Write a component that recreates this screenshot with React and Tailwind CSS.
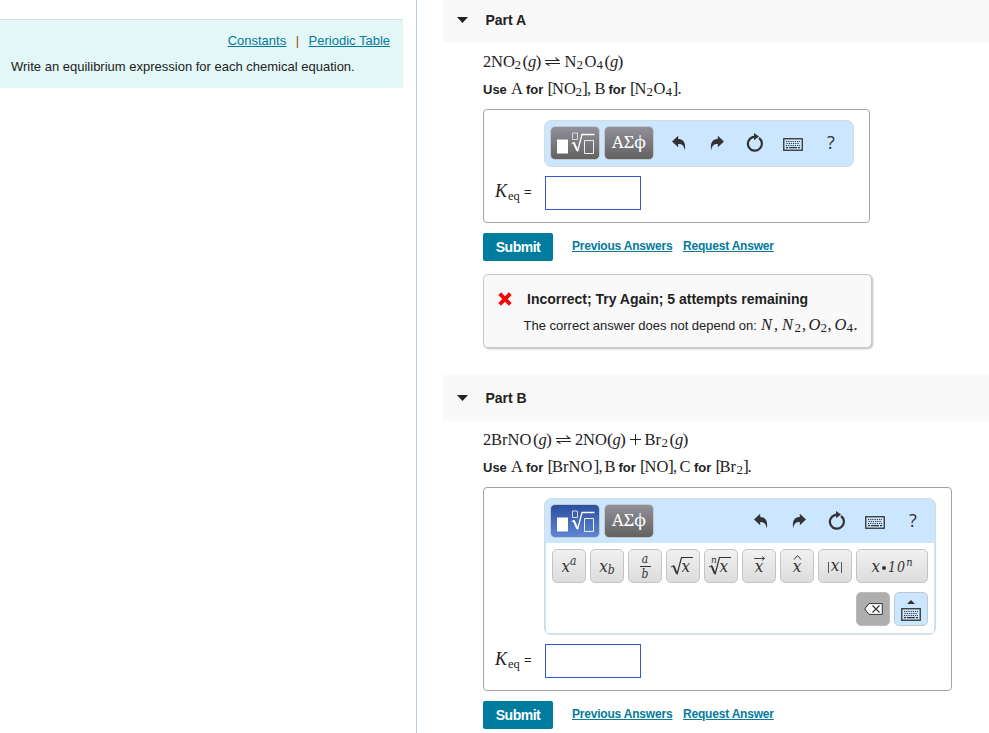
import React from 'react';

const SANS = 'font-["Liberation_Sans",Arial,sans-serif]';
const SERIF = 'font-["Liberation_Serif","Times_New_Roman",serif]';

const KINDS = {
    rm: 'text-[16.5px]',
    it: 'text-[16.5px] italic',
    sub: 'text-[13px] translate-y-[2px]',
    b: 'text-[13px] font-bold font-["Liberation_Sans",Arial,sans-serif]',
    br: 'text-[17.5px]',
};

// tokens: [text, kind, advance]
const G = [['(', 'br', 5.5], ['g', 'it', 7.5], [')', 'br', 5.5]];

const EQ_A = [
    ['2', 'rm', 8], ['NO', 'rm', 23.5], ['2', 'sub', 8], ...G, ['⇌', 'arrow', 23.5],
    ['N', 'rm', 12], ['2', 'sub', 8], ['O', 'rm', 12], ['4', 'sub', 8], ...G,
];
const USE_A = [
    ['Use', 'b', 28], ['A', 'rm', 15], ['for', 'b', 21.5], ['[', 'br', 4.5], ['NO', 'rm', 23.5], ['2', 'sub', 6.5],
    [']', 'br', 5], [',', 'rm', 7.5], ['B', 'rm', 14], ['for', 'b', 21.5], ['[', 'br', 4.5], ['N', 'rm', 12],
    ['2', 'sub', 7], ['O', 'rm', 12], ['4', 'sub', 7], [']', 'br', 5], ['.', 'rm', 5],
];
const EQ_B = [
    ['2', 'rm', 8], ['BrNO', 'rm', 42], ...G, ['⇌', 'arrow', 23.5], ['2', 'rm', 8], ['NO', 'rm', 24], ...G,
    ['+', 'plus', 19], ['Br', 'rm', 17], ['2', 'sub', 8], ...G,
];
const USE_B = [
    ['Use', 'b', 28], ['A', 'rm', 15], ['for', 'b', 21.5], ['[', 'br', 4.5], ['BrNO', 'rm', 41.5],
    [']', 'br', 5], [',', 'rm', 6], ['B', 'rm', 14], ['for', 'b', 21.5], ['[', 'br', 4.5], ['NO', 'rm', 23.5],
    [']', 'br', 5], [',', 'rm', 6.5], ['C', 'rm', 14.5], ['for', 'b', 21.5], ['[', 'br', 4], ['Br', 'rm', 17],
    ['2', 'sub', 6.5], [']', 'br', 4.5], ['.', 'rm', 5],
];
const DEPENDS = [
    ['N', 'it', 13], [',', 'rm', 8], ['N', 'it', 12.5], ['2', 'sub', 7.5], [',', 'rm', 6.5], ['O', 'it', 12],
    ['2', 'sub', 7], [',', 'rm', 7], ['O', 'it', 12], ['4', 'sub', 7], ['.', 'rm', 5],
];

const Tokens = ({ items }) => (
    <span className={`flex h-5 items-baseline whitespace-nowrap text-[#222] ${SERIF}`}>
        {items.map(([text, kind, width], i) => {
            if (kind === 'arrow') {
                return (
                    <span key={i} className="flex justify-center" style={{ width }}>
                        <svg width="15" height="9" viewBox="0 0 15 9" className="-translate-y-px" fill="none" stroke="#222" strokeWidth="1.1" aria-label={text}>
                            <path d="M0 3.500h14.500M10.500.5Q12 3 14.500 3.500M15 6.500H.5M4.500 9Q3 7 .5 6.500" />
                        </svg>
                    </span>
                );
            }
            if (kind === 'plus') {
                return (
                    <span key={i} className="flex justify-center" style={{ width }}>
                        <svg width="11" height="11" viewBox="0 0 11 11" stroke="#222" strokeWidth="1" aria-label={text}>
                            <path d="M5.500 0v11M0 5.500h11" />
                        </svg>
                    </span>
                );
            }
            return (
                <span key={i} className={`inline-block leading-5 ${KINDS[kind]}`} style={{ width }}>{text}</span>
            );
        })}
    </span>
);

const UndoIcon = ({ flip }) => (
    <svg width="14" height="16" viewBox="0 0 14 16" fill="#333" className={`translate-y-px ${flip ? '-scale-x-100' : ''}`}>
        <path d="M0 6.500 6.200 .8v3.200C11 4 14.200 7.200 12.800 15.500 12.100 10.800 10.500 9 6.200 9V12.200z" />
    </svg>
);

const ResetIcon = () => (
    <svg width="18" height="19" viewBox="0 0 18 19" fill="none">
        <path d="M13 5A7 7 0 1 1 6.500 4.100L10 3.600" stroke="#333" strokeWidth="2.200" />
        <path d="M8 0l5 3.600-5 3.600z" fill="#333" />
    </svg>
);

const KeyboardIcon = () => (
    <svg width="20" height="13" viewBox="0 0 20 13" fill="none">
        <rect x=".75" y=".75" width="18.500" height="11.500" stroke="#333" strokeWidth="1.300" />
        <path d="M3 3.500h14M3.500 5.500h13M3 7.500h14" stroke="#333" strokeWidth="1.100" strokeDasharray="1.200 1" />
        <path d="M3 9.700h2M6 9.700h8M15 9.700h2" stroke="#333" strokeWidth="1.200" />
    </svg>
);

const TemplateIcon = () => (
    <svg width="40" height="24" viewBox="0 0 40 24" fill="none" className="translate-x-px">
        <path d="M1 8.500h11v14H1z" fill="#fff" />
        <path d="M16.500 2h5v6.500h-5z" stroke="#d8d8de" />
        <path d="M15.500 12.700l2.500-1.500" stroke="#fff" />
        <path d="M17.700 11.500l3.500 8" stroke="#fff" strokeWidth="2" />
        <path d="M21.500 20.500L26 3.500H38.500" stroke="#fff" strokeWidth="1.300" />
        <path d="M28.500 9.500h9v13h-9z" stroke="#eee" />
    </svg>
);

const ModeButton = ({ active, children }) => (
    <button
        className={`h-[34px] w-[50px] shrink-0 flex items-center justify-center rounded-[5px] border border-[#c8c8c8] bg-linear-to-b ${active ? 'from-[#2c4f9e] to-[#5f87d6]' : 'from-[#92909a] to-[#626262]'}`}
    >
        {children}
    </button>
);

const Toolbar = ({ active }) => (
    <div className={`flex items-start pl-[5px] pt-[5px] ${active ? 'h-[44px]' : 'h-[45px]'}`}>
        <ModeButton active={active}><TemplateIcon /></ModeButton>
        <span className="w-1" />
        <ModeButton>
            <span className='-mt-[3px] font-["Noto_Serif","DejaVu_Serif",serif] text-[17px] leading-none text-white [font-stretch:condensed]'>ΑΣϕ</span>
        </ModeButton>
        <div className="ml-auto flex pr-[3px] *:flex *:h-8 *:w-[38px] *:items-center *:justify-center">
            <button><UndoIcon /></button>
            <button><UndoIcon flip /></button>
            <button><ResetIcon /></button>
            <button className="pt-[5px]"><KeyboardIcon /></button>
            <button className='font-["Open_Sans",sans-serif] text-[18px] text-[#333]'>?</button>
        </div>
    </div>
);

const Key = ({ className = 'w-[34px]', children }) => (
    <button
        className={`h-[34px] shrink-0 flex items-center justify-center rounded-[5px] border border-[#c4c4c4] bg-linear-to-b from-[#f1f1f1] to-[#dcdcdc] font-["DejaVu_Serif",serif] text-[17px] leading-none italic text-[#333] [font-stretch:condensed] ${className}`}
    >
        {children}
    </button>
);

const RootKey = ({ index }) => (
    <svg width="26" height="26" viewBox="0 0 26 26" className="-translate-x-px overflow-visible">
        <path d="M2 14l3-1.500" stroke="#333" fill="none" />
        <path d="M4.700 13l3 7.500" stroke="#333" strokeWidth="2" />
        <path d="M8 21.500L12.500 4.500H24" stroke="#333" strokeWidth="1.200" fill="none" />
        {index && <text x="4" y="10" fontSize="10" fill="#333">n</text>}
        <text x="12.500" y="19" fontSize="17" fill="#333">x</text>
    </svg>
);

const Palette = () => (
    <div className="mx-px mb-px h-[90px] rounded-b-[3px] bg-white pt-[6px] pl-[6px] pr-[6px]">
        <div className="flex gap-1">
            <Key>x<sup className="-top-[5px] text-[12px]">a</sup></Key>
            <Key>x<sub className="top-[4px] text-[12px]">b</sub></Key>
            <Key>
                <span className="flex w-[11px] flex-col items-center text-[12px] leading-[12px]">
                    <span className="w-full border-b border-[#333] pb-px text-center">a</span>
                    <span className="pt-px">b</span>
                </span>
            </Key>
            <Key><RootKey /></Key>
            <Key><RootKey index /></Key>
            <Key>
                <span className="-mt-[4px] flex flex-col items-center">
                    <svg width="11" height="5" viewBox="0 0 11 5" className="translate-y-[2px]" fill="none" stroke="#333" strokeWidth=".9"><path d="M0 2.500h10.500M8 .5l2.500 2L8 4.500" /></svg>
                    <span className="-mt-px">x</span>
                </span>
            </Key>
            <Key>
                <span className="-mt-[4px] flex flex-col items-center">
                    <svg width="9" height="5" viewBox="0 0 9 5" className="translate-y-px" fill="none" stroke="#333" strokeWidth="1"><path d="M1 4.500l3.500-4 3.500 4" /></svg>
                    <span className="-mt-px">x</span>
                </span>
            </Key>
            <Key>
                <span className="mt-[3px] flex h-[11px] items-center border-x border-[#555] px-[2px]"><span className="-mt-[4px]">x</span></span>
            </Key>
            <Key className="w-[72px]">
                <span>x</span>
                <span className="mx-[2px] mt-[4px] size-[4px] rounded-full bg-[#333]" />
                <span className="mt-[2px] text-[14px] tracking-[1px]">10</span>
                <sup className="-top-[3px] text-[11px]">n</sup>
            </Key>
        </div>
        <div className="mt-[9px] flex justify-end gap-1">
            <button className="flex h-[34px] w-[34px] items-center justify-center rounded-[5px] border border-[#bcbcbc] bg-[#aeaeae]">
                <svg width="19" height="12" viewBox="0 0 19 12" fill="none" stroke="#333">
                    <path d="M.7 6L5 .6h13.300v10.800H5z" fill="#fff" />
                    <path d="M8.500 2.500l7 7M15.500 2.500l-7 7" strokeWidth="1.200" />
                </svg>
            </button>
            <button className="flex h-[34px] w-[34px] flex-col items-center justify-center gap-[4px] rounded-[5px] border border-[#c4c8cc] bg-[#cbe6ff] pt-[3px]">
                <svg width="8" height="4" viewBox="0 0 8 4" fill="#333"><path d="M4 0l4 4H0z" /></svg>
                <KeyboardIcon />
            </button>
        </div>
    </div>
);

const AnswerBox = ({ className, expanded }) => (
    <div className={`rounded-[4px] border border-[#a5a5a5] bg-white pl-[60px] pt-[10px] ${className}`}>
        <div className={`rounded-[7px] border border-[#d8dbde] bg-[#cbe6ff] ${expanded ? 'w-[392px]' : 'w-[310px]'}`}>
            <Toolbar active={expanded} />
            {expanded && <Palette />}
        </div>
        <div className="-ml-[49px] mt-[9px] flex items-start text-[#222]">
            <div className={`flex w-[50px] items-baseline pt-[5px] ${SERIF}`}>
                <span className="w-[13px] text-[18px] leading-5 italic">K</span>
                <span className="w-[16px] translate-y-[3px] text-[12.500px] leading-5">eq</span>
                <span className='-translate-y-px font-["Liberation_Sans",sans-serif] text-[13px]'>=</span>
            </div>
            <div className="h-[34px] w-[96px] border border-[#3359c9]" />
        </div>
    </div>
);

const Actions = () => (
    <div className="mt-[10px] flex h-7 items-center font-bold text-[#047a9c]">
        <button className="h-7 w-[70px] rounded-[2px] bg-[#007c9f] text-[14px] tracking-[-0.5px] text-white">Submit</button>
        <a href="#" className="-mt-[2px] ml-[19px] w-[101px] text-[12px] whitespace-nowrap tracking-[-0.2px] underline">Previous Answers</a>
        <a href="#" className="-mt-[2px] ml-[10px] text-[12px] tracking-[-0.2px] whitespace-nowrap underline">Request Answer</a>
    </div>
);

const PartHeader = ({ title, className }) => (
    <div className={`flex items-center bg-[#f9f9f9] pl-[14px] text-[14px] font-bold text-[#222] ${className}`}>
        <svg width="11" height="6" viewBox="0 0 11 6" fill="#222"><path d="M0 0h11L5.500 6z" /></svg>
        <span className="ml-[17.500px]">{title}</span>
    </div>
);

const Feedback = () => (
    <div className="mt-[13px] h-[74px] w-[389px] rounded-[5px] border border-[#c8c8c8] bg-[#f9f9f9] shadow-[1px_1px_2px_#bbb]">
        <div className="flex items-center pl-[14px] pt-[15px]">
            <svg width="14" height="14" viewBox="0 0 14 14" stroke="#ec0c0c" strokeWidth="4"><path d="M1.700 1.700l10.600 10.600M12.300 1.700L1.700 12.300" /></svg>
            <span className="ml-[15px] text-[14px] leading-[18px] font-bold text-[#222]">Incorrect; Try Again; 5 attempts remaining</span>
        </div>
        <div className="mt-[7px] flex items-baseline pl-[39.500px] text-[13px] text-[#222]">
            <span className="w-[237.500px] whitespace-nowrap">The correct answer does not depend on:</span>
            <Tokens items={DEPENDS} />
        </div>
    </div>
);

const App = () => (
    <div className={`flex h-[733px] w-[989px] overflow-hidden bg-white ${SANS}`}>
        <aside className="w-[417px] shrink-0 border-r border-[#b5cade] pt-[19px]">
            <div className="h-[69px] w-[403px] border-t border-[#d3dede] bg-[#e3f7f6] pt-[12px] text-[13px] leading-[18px]">
                <div className="flex justify-end pr-[13px] text-[#047a9c]">
                    <a href="#" className="underline">Constants</a>
                    <span className="mx-[9.500px] text-[#a04c10]">|</span>
                    <a href="#" className="underline">Periodic Table</a>
                </div>
                <p className="mt-[8px] pl-[11px] text-[#222]">Write an equilibrium expression for each chemical equation.</p>
            </div>
        </aside>

        <main className="min-w-0 flex-1 pl-[26px]">
            <PartHeader title="Part A" className="h-[42px] pb-[2px]" />
            <section className="h-[333px] pl-[40px] pt-[9px]">
                <Tokens items={EQ_A} />
                <div className="mt-[7px]"><Tokens items={USE_A} /></div>
                <AnswerBox className="mt-[11px] h-[114px] w-[387px]" />
                <Actions />
                <Feedback />
            </section>

            <PartHeader title="Part B" className="h-[46px]" />
            <section className="pl-[40px] pt-[8px]">
                <Tokens items={EQ_B} />
                <div className="mt-[7px]"><Tokens items={USE_B} /></div>
                <AnswerBox expanded className="mt-[11px] h-[204px] w-[469px]" />
                <Actions />
            </section>
        </main>
    </div>
);

export default App;
